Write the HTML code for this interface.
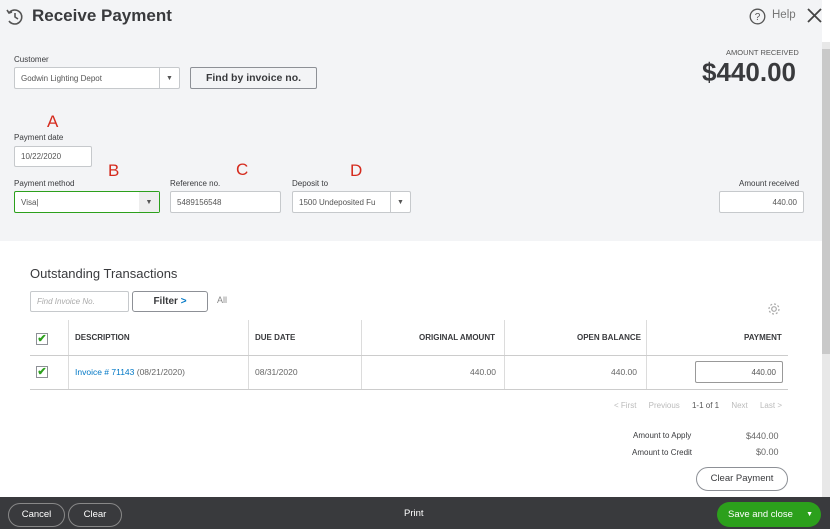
<!DOCTYPE html>
<html><head><meta charset="utf-8"><style>
*{box-sizing:border-box;margin:0;padding:0}
body{width:830px;height:529px;overflow:hidden;font-family:"Liberation Sans",Arial,sans-serif;background:#fff;position:relative;color:#393a3d}
.a{position:absolute}
.top{left:0;top:0;width:822px;height:241px;background:#f3f4f6}
.lbl{font-size:8px;color:#393a3d}
.inp{background:#fff;border:1px solid #c6c9cc;border-radius:2px;font-size:8px;color:#555;padding-left:6px;display:flex;align-items:center}
.red{color:#d52b1e;font-size:17px}
.dd{position:absolute;right:0;top:0;bottom:0;width:20px;border-left:1px solid #c6c9cc;display:flex;align-items:center;justify-content:center;font-size:7px;color:#555}
.th{font-size:8px;font-weight:bold;color:#393a3d}
.td{font-size:8.5px;color:#666}
.cb{width:12px;height:12px;border:1px solid #8d9096;background:#fff;color:#2ca01c;font-size:11px;line-height:10px;text-align:center;font-weight:bold}
.vl{width:1px;background:#dcdcdc}
</style></head><body>
<div class="a top"></div>
<svg class="a" style="left:5px;top:7px" width="20" height="20" viewBox="0 0 20 20" fill="none" stroke="#555" stroke-width="1.6"><path d="M4 6A7 7 0 1 1 4 14"/><path d="M2 3l2 3 3-1"/><path d="M10 6v4l3 2"/></svg>
<div class="a" style="left:32px;top:6px;font-size:17px;font-weight:bold;color:#393a3d">Receive Payment</div>
<svg class="a" style="left:749px;top:8px" width="17" height="17" viewBox="0 0 17 17"><circle cx="8.5" cy="8.5" r="7.3" fill="none" stroke="#555" stroke-width="1.3"/><text x="8.5" y="12" font-size="10" text-anchor="middle" fill="#555" font-family="Liberation Sans">?</text></svg>
<div class="a" style="left:772px;top:9px;font-size:11.5px;color:#777">Help</div>
<svg class="a" style="left:806px;top:7px" width="17" height="17" viewBox="0 0 17 17" stroke="#444" stroke-width="1.8"><path d="M2 2L15 15M15 2L2 15"/></svg>
<div class="a" style="left:822px;top:42px;width:8px;height:455px;background:#e8e8e8"></div>
<div class="a" style="left:822px;top:49px;width:8px;height:305px;background:#c9c9c9"></div>

<div class="a lbl" style="left:14px;top:55px">Customer</div>
<div class="a inp" style="left:14px;top:67px;width:166px;height:22px">Godwin Lighting Depot<div class="dd">▼</div></div>
<div class="a" style="left:190px;top:67px;width:127px;height:22px;border:1px solid #8d9096;border-radius:2px;background:#f3f4f6;font-size:10.5px;font-weight:bold;text-align:center;line-height:20px">Find by invoice no.</div>
<div class="a" style="left:726px;top:48px;font-size:7.5px;color:#555">AMOUNT RECEIVED</div>
<div class="a" style="left:702px;top:57px;font-size:26px;font-weight:bold;color:#393a3d">$440.00</div>

<div class="a red" style="left:47px;top:112px">A</div>
<div class="a lbl" style="left:14px;top:133px">Payment date</div>
<div class="a inp" style="left:14px;top:146px;width:78px;height:21px">10/22/2020</div>
<div class="a red" style="left:108px;top:161px">B</div>
<div class="a red" style="left:236px;top:160px">C</div>
<div class="a red" style="left:350px;top:161px">D</div>
<div class="a lbl" style="left:14px;top:179px">Payment method</div>
<div class="a inp" style="left:14px;top:191px;width:146px;height:22px;border-color:#2ca01c">Visa|<div class="dd" style="border-left:none;background:#eee">▼</div></div>
<div class="a lbl" style="left:170px;top:179px">Reference no.</div>
<div class="a inp" style="left:170px;top:191px;width:111px;height:22px">5489156548</div>
<div class="a lbl" style="left:292px;top:179px">Deposit to</div>
<div class="a inp" style="left:292px;top:191px;width:119px;height:22px">1500 Undeposited Fu<div class="dd">▼</div></div>
<div class="a lbl" style="left:739px;top:179px">Amount received</div>
<div class="a inp" style="left:719px;top:191px;width:85px;height:22px;justify-content:flex-end;padding-right:6px">440.00</div>

<div class="a" style="left:30px;top:266px;font-size:13px;color:#393a3d">Outstanding Transactions</div>
<div class="a inp" style="left:30px;top:291px;width:99px;height:21px;font-style:italic;color:#aaa">Find Invoice No.</div>
<div class="a" style="left:132px;top:291px;width:76px;height:21px;border:1px solid #8d9096;border-radius:3px;font-size:10px;font-weight:bold;text-align:center;line-height:19px">Filter <span style="color:#0077c5">&gt;</span></div>
<div class="a" style="left:217px;top:295px;font-size:9px;color:#888">All</div>
<svg class="a" style="left:767px;top:302px" width="14" height="14" viewBox="0 0 14 14" fill="none" stroke="#aaa" stroke-width="1.2"><circle cx="7" cy="7" r="2.3"/><circle cx="7" cy="7" r="5" stroke-dasharray="2 1.9"/></svg>

<div class="a vl" style="left:68px;top:320px;height:70px"></div>
<div class="a vl" style="left:248px;top:320px;height:70px"></div>
<div class="a vl" style="left:361px;top:320px;height:70px"></div>
<div class="a vl" style="left:504px;top:320px;height:70px"></div>
<div class="a vl" style="left:646px;top:320px;height:70px"></div>
<div class="a" style="left:30px;top:355px;width:758px;height:1px;background:#ccc"></div>
<div class="a" style="left:30px;top:389px;width:758px;height:1px;background:#ccc"></div>
<div class="a cb" style="left:36px;top:333px">✔</div>
<div class="a th" style="left:75px;top:333px">DESCRIPTION</div>
<div class="a th" style="left:255px;top:333px">DUE DATE</div>
<div class="a th" style="left:419px;top:333px">ORIGINAL AMOUNT</div>
<div class="a th" style="left:577px;top:333px">OPEN BALANCE</div>
<div class="a th" style="left:744px;top:333px">PAYMENT</div>
<div class="a cb" style="left:36px;top:366px">✔</div>
<div class="a td" style="left:75px;top:367px"><span style="color:#0077c5">Invoice # 71143</span> (08/21/2020)</div>
<div class="a td" style="left:255px;top:367px">08/31/2020</div>
<div class="a td" style="left:470px;top:367px">440.00</div>
<div class="a td" style="left:611px;top:367px">440.00</div>
<div class="a inp" style="left:695px;top:361px;width:88px;height:22px;justify-content:flex-end;padding-right:6px;border-color:#999">440.00</div>
<div class="a" style="left:614px;top:401px;width:168px;font-size:8px;color:#bbb;display:flex;justify-content:space-between"><span>&lt; First</span><span>Previous</span><span style="color:#555">1-1 of 1</span><span>Next</span><span>Last &gt;</span></div>
<div class="a" style="left:633px;top:431px;font-size:8px;color:#393a3d">Amount to Apply</div>
<div class="a" style="left:746px;top:431px;font-size:9px;color:#666">$440.00</div>
<div class="a" style="left:632px;top:448px;font-size:8px;color:#393a3d">Amount to Credit</div>
<div class="a" style="left:756px;top:447px;font-size:9px;color:#666">$0.00</div>
<div class="a" style="left:696px;top:467px;width:92px;height:24px;border:1px solid #8d9096;border-radius:12px;font-size:9.5px;text-align:center;line-height:22px">Clear Payment</div>

<div class="a" style="left:0;top:497px;width:830px;height:32px;background:#393a3d"></div>
<div class="a" style="left:8px;top:503px;width:57px;height:24px;border:1px solid #888;border-radius:12px;color:#fff;font-size:9.5px;text-align:center;line-height:22px">Cancel</div>
<div class="a" style="left:68px;top:503px;width:54px;height:24px;border:1px solid #888;border-radius:12px;color:#fff;font-size:9.5px;text-align:center;line-height:22px">Clear</div>
<div class="a" style="left:404px;top:508px;color:#fff;font-size:9.5px">Print</div>
<div class="a" style="left:717px;top:502px;width:104px;height:25px;background:#2ca01c;border-radius:13px;color:#fff;font-size:9.5px;line-height:25px;padding-left:11px">Save and close <span style="position:absolute;right:8px;font-size:7px">▼</span></div>
</body></html>
